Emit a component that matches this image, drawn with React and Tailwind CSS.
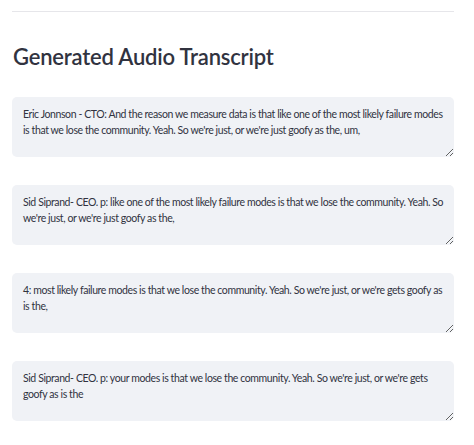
import React from 'react';

const transcripts = [
  "Eric Jonnson - CTO: And the reason we measure data is that like one of the most likely failure modes is that we lose the community. Yeah. So we're just, or we're just goofy as the, um,",
  "Sid Siprand- CEO. p: like one of the most likely failure modes is that we lose the community. Yeah. So we're just, or we're just goofy as the,",
  "4: most likely failure modes is that we lose the community. Yeah. So we're just, or we're gets goofy as is the,",
  "Sid Siprand- CEO. p: your modes is that we lose the community. Yeah. So we're just, or we're gets goofy as is the",
];

const App = () => {
  return (
    <div
      className="w-[474px] h-[445px] bg-white px-3 overflow-hidden text-[#31333f]"
      style={{ fontFamily: 'Lato, "Noto Sans", sans-serif' }}
    >
      {/* divider */}
      <div className="pt-[11px] w-[442px]">
        <hr className="border-0 border-t border-[#e6e6ea]" />
      </div>

      <h2 className="mt-[31px] mb-0 text-[22px] leading-[28px] font-semibold tracking-[-0.2px] pl-px">
        Generated Audio Transcript
      </h2>

      <div className="mt-[26px] flex flex-col gap-[28px] w-[442px]">
        {transcripts.map((t, i) => (
          <textarea
            key={i}
            readOnly
            defaultValue={t}
            className="block w-full h-[60px] resize-y rounded-[5px] bg-[#f0f2f6] pl-[11px] pr-[7px] pt-[10px] text-[10.5px] leading-[15.5px] tracking-[-0.4px] text-[#31333f] outline-none"
            style={{ fontFamily: 'Lato, "Noto Sans", sans-serif' }}
          />
        ))}
      </div>
    </div>
  );
};

export default App;
